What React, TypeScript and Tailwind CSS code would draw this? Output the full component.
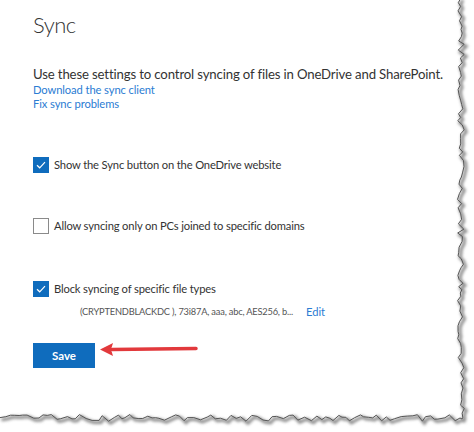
import React from 'react'

const font = { fontFamily: 'Lato, "Open Sans", sans-serif' }

// jagged torn-paper edge, deterministic
function tornPath() {
  let seed = 7
  const rnd = () => {
    seed = (seed * 9301 + 49297) % 233280
    return seed / 233280
  }
  const pts: string[] = []
  for (let y = -2; y <= 418; y += 3 + rnd() * 3) {
    pts.push(`${(461 + (rnd() - 0.5) * 7).toFixed(1)},${y.toFixed(1)}`)
  }
  pts.push('462,419')
  for (let x = 460; x >= -2; x -= 3 + rnd() * 4) {
    pts.push(`${x.toFixed(1)},${(418 + (rnd() - 0.5) * 7).toFixed(1)}`)
  }
  return 'M' + pts.join(' L')
}

function Check({ checked }: { checked: boolean }) {
  if (!checked) return <span className="w-4 h-4 border border-[#8a8a8a] bg-white shrink-0" />
  return (
    <span className="w-4 h-4 bg-[#0f6cbd] shrink-0 flex items-center justify-center">
      <svg width="10" height="8" viewBox="0 0 10 8" fill="none">
        <path d="M1 4.2 L3.7 6.8 L9 1.2" stroke="white" strokeWidth="1.2" />
      </svg>
    </span>
  )
}

function Row({ checked, label }: { checked: boolean; label: string }) {
  return (
    <div className="flex items-center gap-[5px] h-4">
      <Check checked={checked} />
      <span className="text-[11.2px] tracking-[-0.15px] text-[#333] whitespace-nowrap">{label}</span>
    </div>
  )
}

export default function App() {
  const d = tornPath()
  return (
    <div className="relative w-[474px] h-[432px] bg-white overflow-hidden" style={font}>
      <div className="flex flex-col items-start pl-[33px] pt-[10px]">
        <h1 className="text-[22px] leading-[30px] font-light tracking-[-0.5px] text-[#333]">Sync</h1>
        <p className="mt-[25px] text-[13.2px] leading-[18px] tracking-[-0.15px] text-[#333] whitespace-nowrap">
          Use these settings to control syncing of files in OneDrive and SharePoint.
        </p>
        <a className="text-[11.2px] leading-[14px] tracking-[-0.1px] text-[#2b7cd3]">Download the sync client</a>
        <a className="text-[11.2px] leading-[14px] tracking-[-0.1px] text-[#2b7cd3]">Fix sync problems</a>

        <div className="mt-[46px]">
          <Row checked label="Show the Sync button on the OneDrive website" />
        </div>
        <div className="mt-[45px]">
          <Row checked={false} label="Allow syncing only on PCs joined to specific domains" />
        </div>
        <div className="mt-[47px]">
          <Row checked label="Block syncing of specific file types" />
        </div>
        <div className="mt-[7px] pl-[47px] flex items-center h-4 whitespace-nowrap">
          <span className="text-[9.3px] tracking-[-0.2px] text-[#555]">(CRYPTENDBLACKDC ), 73i87A, aaa, abc, AES256, b...</span>
          <a className="ml-[13px] text-[11.2px] text-[#2b7cd3]">Edit</a>
        </div>
        <button className="mt-[23px] w-[62px] h-[25px] bg-[#0f6cbd] text-white text-[11.5px] font-bold">
          Save
        </button>
      </div>

      {/* annotation arrow */}
      <svg className="absolute left-[98px] top-[340px]" width="104" height="20" viewBox="0 0 104 20">
        <path d="M14 9.5 L98 8.5" stroke="#e2393c" strokeWidth="3.5" strokeLinecap="round" />
        <path d="M2 9.5 L15 3 L13 9.5 L15 16 Z" fill="#e2393c" />
      </svg>

      {/* torn paper edge */}
      <svg className="absolute inset-0 pointer-events-none" width="474" height="432" viewBox="0 0 474 432">
        <defs>
          <filter id="blur" x="-10%" y="-10%" width="120%" height="120%">
            <feGaussianBlur stdDeviation="1.6" />
          </filter>
        </defs>
        <path d={d} transform="translate(2 2)" fill="none" stroke="#888" strokeWidth="3" filter="url(#blur)" />
        <path d={d} fill="none" stroke="#555" strokeWidth="1" />
      </svg>
    </div>
  )
}
